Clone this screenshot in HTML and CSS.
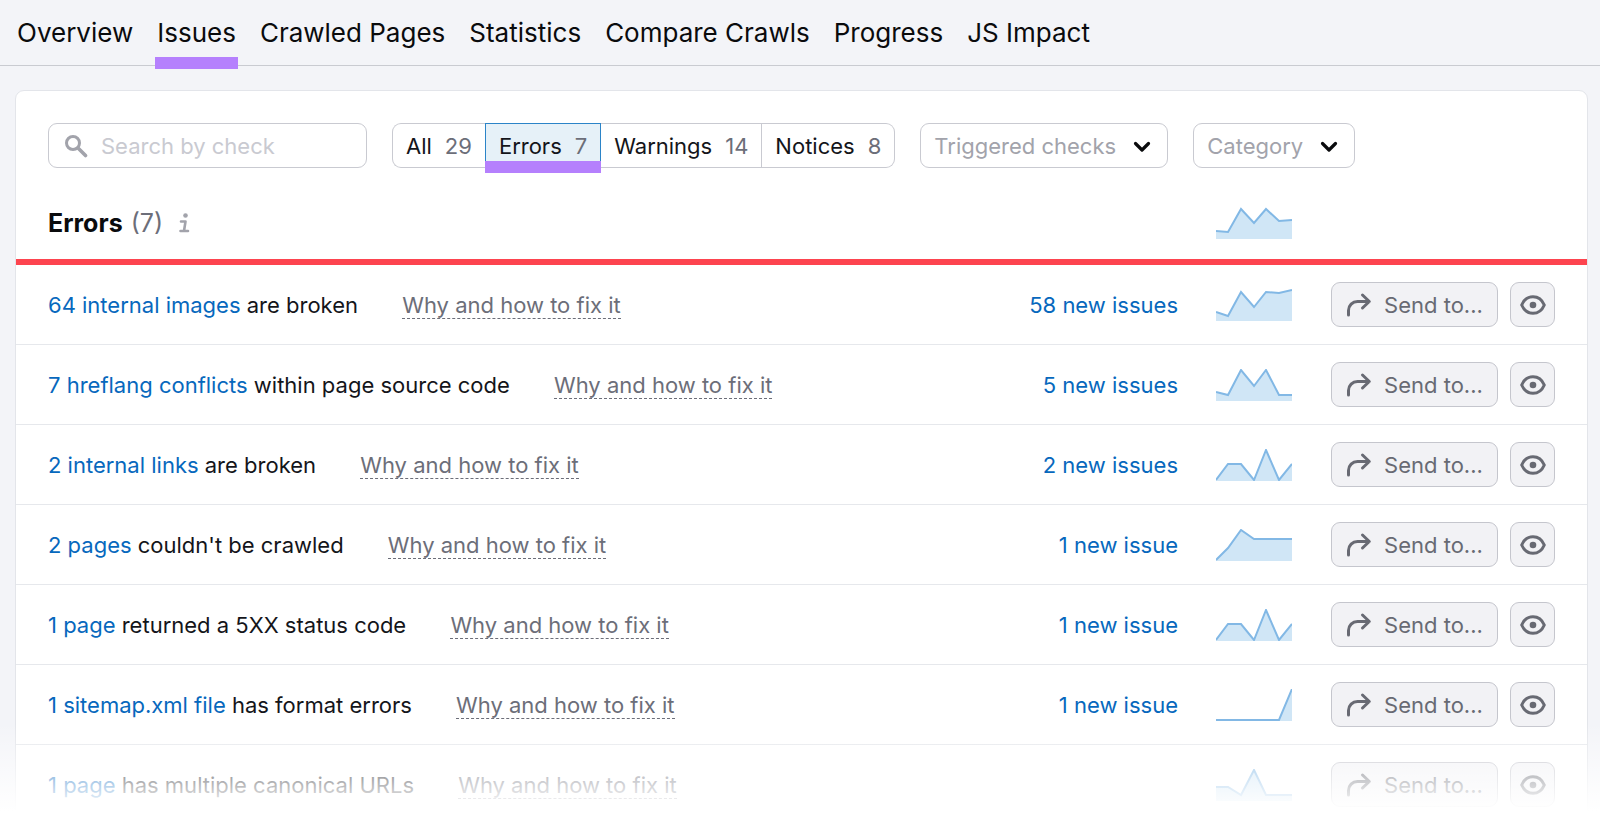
FILE: index.html
```html
<!DOCTYPE html>
<html lang="en">
<head>
  <meta charset="UTF-8">
  <meta name="viewport" content="width=device-width, initial-scale=1.0">
  <title>Site Audit - Issues</title>
  <link rel="stylesheet" href="styles.css">
</head>
<body>
  <!-- Shared icons -->
  <svg class="sprite" aria-hidden="true">
    <symbol id="icon-send" viewBox="0 0 26 26">
      <path d="M2.500 23V18.500a9 9 0 0 1 9-9H23M16.500 3L23.300 9.500L16.500 16" fill="none" stroke="currentColor" stroke-width="3" stroke-linecap="round" stroke-linejoin="round"/>
    </symbol>
    <symbol id="icon-eye" viewBox="0 0 26 20">
      <path d="M1.700 10C4 4.500 8 1.700 13 1.700S22 4.500 24.300 10C22 15.500 18 18.300 13 18.300S4 15.500 1.700 10Z" fill="none" stroke="currentColor" stroke-width="3" stroke-linejoin="round"/>
      <circle cx="13" cy="10" r="3.300" fill="currentColor"/>
    </symbol>
    <symbol id="icon-chevron" viewBox="0 0 18 12">
      <path d="M2.500 2.500L9 9L15.500 2.500" fill="none" stroke="currentColor" stroke-width="3.200" stroke-linecap="round" stroke-linejoin="round"/>
    </symbol>
  </svg>

  <div class="page">
    <nav class="tabs">
      <a href="#">Overview</a>
      <a href="#" class="active">Issues</a>
      <a href="#">Crawled Pages</a>
      <a href="#">Statistics</a>
      <a href="#">Compare Crawls</a>
      <a href="#">Progress</a>
      <a href="#">JS Impact</a>
    </nav>

    <main class="card">
      <!-- Filters -->
      <div class="filters">
        <div class="search">
          <svg width="24" height="24" viewBox="0 0 24 24" aria-hidden="true">
            <circle cx="9" cy="9" r="6.500" fill="none" stroke="currentColor" stroke-width="3"/>
            <path d="M14 14L21.500 21.500" stroke="currentColor" stroke-width="3.600" stroke-linecap="round"/>
          </svg>
          <input type="text" placeholder="Search by check" aria-label="Search by check">
        </div>
        <div class="pills">
          <button type="button">All <span>29</span></button>
          <button type="button" class="selected">Errors <span>7</span></button>
          <button type="button">Warnings <span>14</span></button>
          <button type="button">Notices <span>8</span></button>
        </div>
        <div class="dropdown">
          <select aria-label="Triggered checks"><option>Triggered checks</option></select>
          <svg width="18" height="12"><use href="#icon-chevron"/></svg>
        </div>
        <div class="dropdown">
          <select aria-label="Category"><option>Category</option></select>
          <svg width="18" height="12"><use href="#icon-chevron"/></svg>
        </div>
      </div>

      <!-- Issue list -->
      <table class="issues">
        <thead>
          <tr>
            <th colspan="2" class="heading">
              <h2>Errors <span>(7)</span>
                <svg width="12" height="20" viewBox="0 0 12 20" aria-hidden="true">
                  <circle cx="6.500" cy="2.500" r="2.300" fill="currentColor"/>
                  <path d="M2 8.500H6.500L5 18M1.500 18H9" fill="none" stroke="currentColor" stroke-width="2.600" stroke-linecap="round" stroke-linejoin="round"/>
                </svg>
              </h2>
            </th>
            <th class="trend"><svg class="spark" viewBox="0 0 76 32"><path d="M0 24L12 25L25 2L38 16L50 2L63 14L76 13V32H0Z"/><polyline points="0,24 12,25 25,2 38,16 50,2 63,14 76,13"/></svg></th>
            <th></th>
          </tr>
        </thead>
        <tbody>
          <tr>
            <td class="check"><a href="#">64 internal images</a> are broken <a href="#" class="why">Why and how to fix it</a></td>
            <td class="new"><a href="#">58 new issues</a></td>
            <td class="trend"><svg class="spark" viewBox="0 0 76 32"><path d="M0 23L12 27L25 3L38 18L50 3L63 4L76 1V32H0Z"/><polyline points="0,23 12,27 25,3 38,18 50,3 63,4 76,1"/></svg></td>
            <td class="actions"><div>
              <button type="button" class="btn"><svg width="26" height="26"><use href="#icon-send"/></svg>Send to...</button>
              <button type="button" class="btn btn-eye" aria-label="Hide check"><svg width="26" height="20"><use href="#icon-eye"/></svg></button>
            </div></td>
          </tr>
          <tr>
            <td class="check"><a href="#">7 hreflang conflicts</a> within page source code <a href="#" class="why">Why and how to fix it</a></td>
            <td class="new"><a href="#">5 new issues</a></td>
            <td class="trend"><svg class="spark" viewBox="0 0 76 32"><path d="M0 23L12 26L25 1L38 17L50 1L63 26H76V32H0Z"/><polyline points="0,23 12,26 25,1 38,17 50,1 63,26 76,26"/></svg></td>
            <td class="actions"><div>
              <button type="button" class="btn"><svg width="26" height="26"><use href="#icon-send"/></svg>Send to...</button>
              <button type="button" class="btn btn-eye" aria-label="Hide check"><svg width="26" height="20"><use href="#icon-eye"/></svg></button>
            </div></td>
          </tr>
          <tr>
            <td class="check"><a href="#">2 internal links</a> are broken <a href="#" class="why">Why and how to fix it</a></td>
            <td class="new"><a href="#">2 new issues</a></td>
            <td class="trend"><svg class="spark" viewBox="0 0 76 32"><path d="M0 31L12 15H25L38 31L50 1L63 31L76 15V32H0Z"/><polyline points="0,31 12,15 25,15 38,31 50,1 63,31 76,15"/></svg></td>
            <td class="actions"><div>
              <button type="button" class="btn"><svg width="26" height="26"><use href="#icon-send"/></svg>Send to...</button>
              <button type="button" class="btn btn-eye" aria-label="Hide check"><svg width="26" height="20"><use href="#icon-eye"/></svg></button>
            </div></td>
          </tr>
          <tr>
            <td class="check"><a href="#">2 pages</a> couldn't be crawled <a href="#" class="why">Why and how to fix it</a></td>
            <td class="new"><a href="#">1 new issue</a></td>
            <td class="trend"><svg class="spark" viewBox="0 0 76 32"><path d="M0 31L12 19L25 1L38 10H76V32H0Z"/><polyline points="0,31 12,19 25,1 38,10 76,10"/></svg></td>
            <td class="actions"><div>
              <button type="button" class="btn"><svg width="26" height="26"><use href="#icon-send"/></svg>Send to...</button>
              <button type="button" class="btn btn-eye" aria-label="Hide check"><svg width="26" height="20"><use href="#icon-eye"/></svg></button>
            </div></td>
          </tr>
          <tr>
            <td class="check"><a href="#">1 page</a> returned a 5XX status code <a href="#" class="why">Why and how to fix it</a></td>
            <td class="new"><a href="#">1 new issue</a></td>
            <td class="trend"><svg class="spark" viewBox="0 0 76 32"><path d="M0 31L12 15H25L38 31L50 1L63 31L76 15V32H0Z"/><polyline points="0,31 12,15 25,15 38,31 50,1 63,31 76,15"/></svg></td>
            <td class="actions"><div>
              <button type="button" class="btn"><svg width="26" height="26"><use href="#icon-send"/></svg>Send to...</button>
              <button type="button" class="btn btn-eye" aria-label="Hide check"><svg width="26" height="20"><use href="#icon-eye"/></svg></button>
            </div></td>
          </tr>
          <tr>
            <td class="check"><a href="#">1 sitemap.xml file</a> has format errors <a href="#" class="why">Why and how to fix it</a></td>
            <td class="new"><a href="#">1 new issue</a></td>
            <td class="trend"><svg class="spark" viewBox="0 0 76 32"><path d="M0 31H63L76 0V32H0Z"/><polyline points="0,31 63,31 76,0"/></svg></td>
            <td class="actions"><div>
              <button type="button" class="btn"><svg width="26" height="26"><use href="#icon-send"/></svg>Send to...</button>
              <button type="button" class="btn btn-eye" aria-label="Hide check"><svg width="26" height="20"><use href="#icon-eye"/></svg></button>
            </div></td>
          </tr>
          <tr>
            <td class="check"><a href="#">1 page</a> has multiple canonical URLs <a href="#" class="why">Why and how to fix it</a></td>
            <td class="new"></td>
            <td class="trend"><svg class="spark" viewBox="0 0 76 32"><path d="M0 18H12L25 26L38 1L50 26H76V32H0Z"/><polyline points="0,18 12,18 25,26 38,1 50,26 76,26"/></svg></td>
            <td class="actions"><div>
              <button type="button" class="btn"><svg width="26" height="26"><use href="#icon-send"/></svg>Send to...</button>
              <button type="button" class="btn btn-eye" aria-label="Hide check"><svg width="26" height="20"><use href="#icon-eye"/></svg></button>
            </div></td>
          </tr>
        </tbody>
      </table>
    </main>
  </div>
</body>
</html>
```

FILE: styles.css
```css
* {
  box-sizing: border-box;
}

body {
  margin: 0;
  background: #f3f4f8;
  color: #14151a;
  font-family: Inter, "Liberation Sans", sans-serif;
  font-size: 22px;
  line-height: 28px;
}

a {
  color: #0768bd;
  text-decoration: none;
}

button,
input,
select {
  font: inherit;
}

svg {
  display: block;
  flex: none;
}

.sprite {
  position: absolute;
  width: 0;
  height: 0;
}

.page {
  position: relative;
  height: 100vh;
  overflow: hidden;
}

/* Fades the end of the list out to white */
.page::after {
  content: "";
  position: absolute;
  left: 0;
  right: 0;
  bottom: 0;
  height: 92px;
  background: linear-gradient(rgba(255, 255, 255, 0), #fff 96%);
  pointer-events: none;
}

/* Tabs */
.tabs {
  display: flex;
  gap: 20px;
  height: 66px;
  padding: 0 15px;
  border-bottom: 1px solid #c9cbd1;
}

.tabs a {
  position: relative;
  padding: 0 2px;
  color: #0a0b0d;
  font-size: 26px;
  line-height: 66px;
}

.tabs a.active::after,
.pills .selected::after {
  content: "";
  position: absolute;
  left: 0;
  right: 0;
  bottom: -4px;
  height: 12px;
  background: #b580fd;
}

/* Card */
.card {
  margin: 24px 12px 0 15px;
  background: #fff;
  border: 1px solid #e3e5ea;
  border-radius: 9px;
}

.filters {
  display: flex;
  gap: 25px;
  padding: 32px 32px 0;
}

.search,
.dropdown {
  position: relative;
  height: 45px;
}

.search {
  width: 319px;
}

.search svg {
  position: absolute;
  left: 16px;
  top: 11px;
  color: #a2a3ab;
}

.search input {
  width: 100%;
  height: 100%;
  padding: 0 12px 0 52px;
  background: #fff;
  border: 1px solid #c9cad1;
  border-radius: 9px;
}

.search input::placeholder {
  color: #c9cad1;
  opacity: 1;
}

.pills {
  display: flex;
  height: 45px;
}

.pills button {
  position: relative;
  display: flex;
  align-items: center;
  gap: 13px;
  padding: 0 13px;
  background: #fff;
  border: 1px solid #c9cad1;
  border-left-width: 0;
  color: #14151a;
}

.pills button:first-child {
  border-left-width: 1px;
  border-right-width: 0;
  border-radius: 9px 0 0 9px;
}

.pills button:last-child {
  border-radius: 0 9px 9px 0;
}

.pills span {
  color: #6c6e79;
}

.pills .selected {
  background: #e6f1f8;
  border: 1px solid #2b84c8;
}

.pills .selected::after {
  left: -1px;
  right: -1px;
  bottom: -6px;
}

.dropdown select {
  height: 100%;
  padding: 0 51px 0 13px;
  appearance: none;
  background: #fff;
  border: 1px solid #c9cad1;
  border-radius: 9px;
  color: #a2a3ab;
}

.dropdown svg {
  position: absolute;
  right: 17px;
  top: 18px;
  color: #0a0b0d;
  pointer-events: none;
}

/* Issue list */
.issues {
  width: 100%;
  border-collapse: separate;
  border-spacing: 0;
}

.issues th,
.issues td {
  padding: 0;
  text-align: left;
  font-weight: 400;
}

.issues th {
  height: 97px;
  padding-top: 18px;
  border-bottom: 6px solid #fd444f;
}

.issues td {
  height: 80px;
  border-bottom: 1px solid #e6e8ec;
}

.issues .heading,
.issues .check {
  padding-left: 32px;
}

.heading h2 {
  display: flex;
  align-items: center;
  gap: 8px;
  margin: 0;
  font-size: 25px;
  font-weight: 700;
  color: #0a0b0d;
}

.heading span {
  font-weight: 400;
  color: #6c6e79;
}

.heading svg {
  margin-left: 8px;
  color: #a2a3ab;
}

.issues .why {
  margin-left: 38px;
  border-bottom: 1px dashed #6c6e79;
  color: #6c6e79;
}

.issues .new {
  text-align: right;
}

.issues .trend {
  width: 153px;
  padding-left: 38px;
}

.spark {
  width: 76px;
  height: 32px;
}

.spark path {
  fill: #d0e6f6;
}

.spark polyline {
  fill: none;
  stroke: #82b8e5;
  stroke-width: 2;
}

.issues .actions {
  width: 256px;
  padding-right: 32px;
}

.actions div {
  display: flex;
  justify-content: flex-end;
  gap: 12px;
}

.btn {
  display: flex;
  align-items: center;
  justify-content: center;
  gap: 12px;
  width: 167px;
  height: 45px;
  padding: 0;
  background: #f2f2f5;
  border: 1px solid #c5c6cd;
  border-radius: 9px;
  color: #686a73;
}

.btn-eye {
  width: 45px;
}
```
